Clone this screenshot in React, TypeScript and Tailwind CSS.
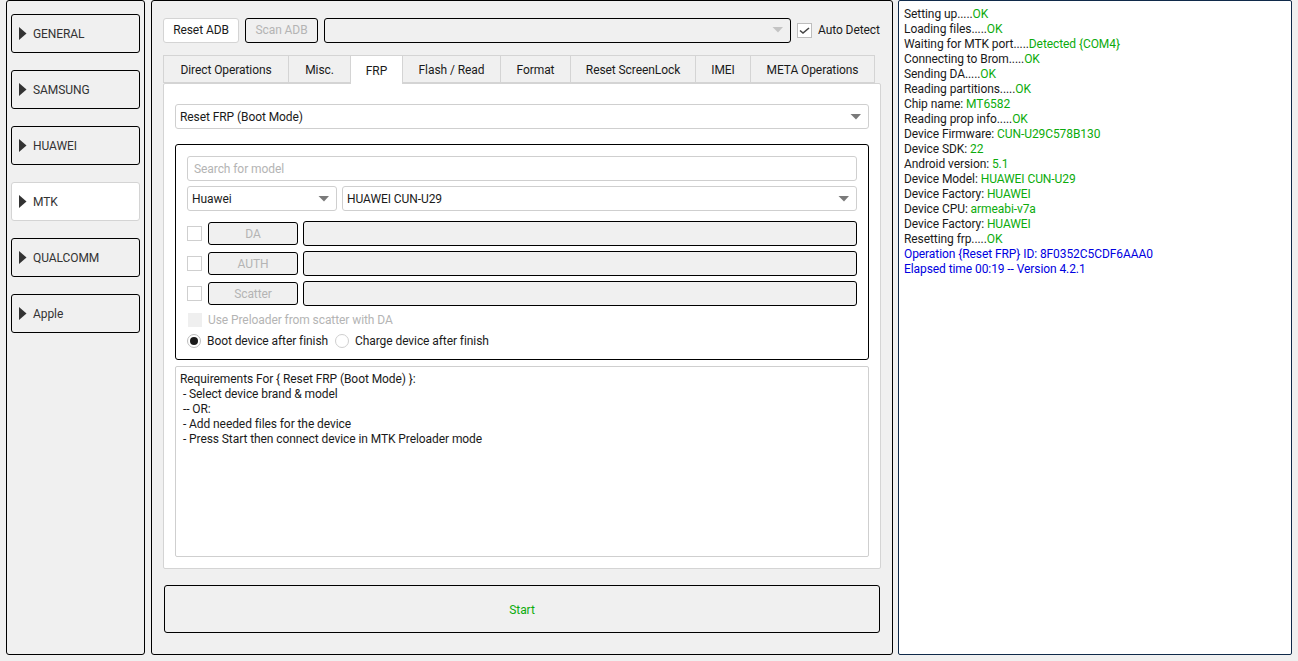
const navItems = ["GENERAL", "SAMSUNG", "HUAWEI", "MTK", "QUALCOMM", "Apple"]
const tabs = [
  { label: "Direct Operations", w: "w-[126px]" },
  { label: "Misc.", w: "w-[62px]" },
  { label: "FRP", w: "w-[52px]" },
  { label: "Flash / Read", w: "w-[98px]" },
  { label: "Format", w: "w-[70px]" },
  { label: "Reset ScreenLock", w: "w-[125px]" },
  { label: "IMEI", w: "w-[55px]" },
  { label: "META Operations", w: "w-[124px]" },
]

const logLines: [string, string][] = [
  ["Setting up.....", "OK"],
  ["Loading files.....", "OK"],
  ["Waiting for MTK port.....", "Detected {COM4}"],
  ["Connecting to Brom.....", "OK"],
  ["Sending DA.....", "OK"],
  ["Reading partitions.....", "OK"],
  ["Chip name: ", "MT6582"],
  ["Reading prop info.....", "OK"],
  ["Device Firmware: ", "CUN-U29C578B130"],
  ["Device SDK: ", "22"],
  ["Android version: ", "5.1"],
  ["Device Model: ", "HUAWEI CUN-U29"],
  ["Device Factory: ", "HUAWEI"],
  ["Device CPU: ", "armeabi-v7a"],
  ["Device Factory: ", "HUAWEI"],
  ["Resetting frp.....", "OK"],
]

// Roboto sits a pixel higher than the reference text, the extra top padding evens that out
function Label({ children }: { children: React.ReactNode }) {
  return <span className="pt-[2px]">{children}</span>
}

function Arrow({ light }: { light?: boolean }) {
  return (
    <svg width="12" height="6" viewBox="0 0 12 6" className="shrink-0">
      <path d="M0.5 0 H11 L6 5.5 Z" fill={light ? "#c4c4c4" : "#7a7a7a"} />
    </svg>
  )
}

function Select({ value, className }: { value: string; className: string }) {
  return (
    <div className={`h-[25px] flex items-center justify-between pl-[4px] pr-[6px] bg-white border border-[#cfcfcf] rounded-[3px] ${className}`}>
      <Label>{value}</Label>
      <Arrow />
    </div>
  )
}

function FileRow({ label }: { label: string }) {
  return (
    <div className="flex items-center h-[24px]">
      <div className="w-[15px] h-[15px] bg-white border border-[#cfcfcf] mr-[6px]" />
      <div className="w-[90px] h-[23px] flex items-center justify-center bg-[#f0f0f0] border border-black rounded-[3px] text-[#b4b4b4] mr-[5px]">
        <Label>{label}</Label>
      </div>
      <div className="flex-1 h-[25px] bg-[#f0f0f0] border border-black rounded-[3px]" />
    </div>
  )
}

export default function App() {
  return (
    <div className="w-[1298px] h-[661px] bg-[#f0f0f0] flex items-start pl-[6px] text-[12px] leading-[15px] tracking-[-0.08px] text-[#1a1a1a] overflow-hidden font-['Roboto','Noto_Sans',sans-serif]">
      {/* Side nav */}
      <div className="w-[139px] h-[655px] border border-black rounded-[3px] bg-[#f0f0f0] pt-[13px] px-[4px] flex flex-col gap-[17px] mr-[6px]">
        {navItems.map((item) => (
          <div
            key={item}
            className={`h-[39px] flex items-center pl-[7px] rounded-[3px] border text-[#333] ${item === "MTK" ? "bg-white border-[#d4d4d4]" : "border-black"}`}
          >
            <svg width="8" height="13" viewBox="0 0 8 13" className="mr-[6px]">
              <path d="M0 0 L7.5 6.5 L0 13 Z" fill="#333" />
            </svg>
            <Label>{item}</Label>
          </div>
        ))}
      </div>

      {/* Middle */}
      <div className="w-[742px] h-[655px] border border-black rounded-[3px] bg-[#f0f0f0] pt-[16px] pl-[11px] mr-[5px]">
        <div className="flex items-center h-[26px]">
          <div className="w-[76px] h-[25px] flex items-center justify-center bg-white border border-[#d4d4d4] rounded-[3px] mr-[6px]">
            Reset ADB
          </div>
          <div className="w-[73px] h-[25px] flex items-center justify-center bg-[#f0f0f0] border border-black rounded-[3px] text-[#b4b4b4] mr-[6px]">
            Scan ADB
          </div>
          <div className="w-[467px] h-[25px] flex items-center justify-end pr-[6px] bg-[#f0f0f0] border border-black rounded-[3px] mr-[6px]">
            <Arrow light />
          </div>
          <div className="w-[15px] h-[15px] bg-white border border-[#bdbdbd] flex items-center justify-center mr-[6px]">
            <svg width="11" height="9" viewBox="0 0 11 9">
              <path d="M1 4.5 L4 7 L10 2" stroke="#444" strokeWidth="1.6" fill="none" />
            </svg>
          </div>
          <span>Auto Detect</span>
        </div>

        <div className="flex h-[29px] mt-[12px]">
          {tabs.map((tab) => (
            <div
              key={tab.label}
              className={`${tab.w} flex items-center justify-center border-t border-r border-[#d4d4d4] first:border-l ${tab.label === "FRP" ? "bg-white h-[29px] relative z-10" : "bg-[#f0f0f0] h-[28px] border-b"}`}
            >
              <Label>{tab.label}</Label>
            </div>
          ))}
        </div>

        {/* Tab panel */}
        <div className="w-[718px] h-[486px] -mt-px bg-white border border-[#d4d4d4] rounded-[2px] pt-[20px] px-[11px]">
          <Select value="Reset FRP (Boot Mode)" className="w-[694px]" />

          <div className="w-[694px] h-[216px] mt-[15px] border border-black rounded-[3px] pt-[11px] px-[11px]">
            <div className="h-[25px] flex items-center pl-[6px] border border-[#cfcfcf] rounded-[3px] text-[#b4b4b4]">
              <Label>Search for model</Label>
            </div>
            <div className="flex gap-[5px] mt-[5px]">
              <Select value="Huawei" className="w-[150px]" />
              <Select value="HUAWEI CUN-U29" className="flex-1" />
            </div>
            <div className="flex flex-col gap-[6px] mt-[10px]">
              <FileRow label="DA" />
              <FileRow label="AUTH" />
              <FileRow label="Scatter" />
            </div>
            <div className="flex items-center h-[15px] mt-[7px] text-[#b4b4b4]">
              <div className="w-[14px] h-[14px] ml-px bg-[#efefef] mr-[6px]" />
              <Label>Use Preloader from scatter with DA</Label>
            </div>
            <div className="flex items-center h-[15px] mt-[6px]">
              <div className="w-[14px] h-[14px] rounded-full border border-[#bdbdbd] flex items-center justify-center mr-[6px]">
                <div className="w-[8px] h-[8px] rounded-full bg-[#1a1a1a]" />
              </div>
              <Label>Boot device after finish</Label>
              <div className="w-[14px] h-[14px] rounded-full border border-[#cfcfcf] ml-[7px] mr-[6px]" />
              <Label>Charge device after finish</Label>
            </div>
          </div>

          <div className="w-[694px] h-[191px] mt-[6px] border border-[#cfcfcf] rounded-[2px] pt-[5px] pl-[4px]">
            <div>Requirements For {"{"} Reset FRP (Boot Mode) {"}"}:</div>
            <div>&nbsp;- Select device brand &amp; model</div>
            <div>&nbsp;-- OR:</div>
            <div>&nbsp;- Add needed files for the device</div>
            <div>&nbsp;- Press Start then connect device in MTK Preloader mode</div>
          </div>
        </div>

        <div className="w-[716px] h-[48px] mt-[16px] ml-px flex items-center justify-center border border-black rounded-[3px] text-[#0cab0c]">
          <Label>Start</Label>
        </div>
      </div>

      {/* Log */}
      <div className="w-[394px] h-[655px] bg-white border border-[#102a4a] rounded-[2px] pt-[6px] pl-[5px]">
        {logLines.map(([text, value], i) => (
          <div key={i}>
            {text}
            <span className="text-[#0cab0c]">{value}</span>
          </div>
        ))}
        <div className="text-[#0000e0]">Operation {"{"}Reset FRP{"}"} ID: 8F0352C5CDF6AAA0</div>
        <div className="text-[#0000e0]">Elapsed time 00:19 -- Version 4.2.1</div>
      </div>
    </div>
  )
}
